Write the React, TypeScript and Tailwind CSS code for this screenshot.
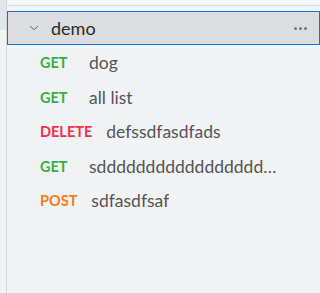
import { ChevronDown } from "lucide-react"

type Api = { method: "GET" | "POST" | "DELETE"; name: string }

const apis: Api[] = [
  { method: "GET", name: "dog" },
  { method: "GET", name: "all list" },
  { method: "DELETE", name: "defssdfasdfads" },
  { method: "GET", name: "sddddddddddddddddddddddddd" },
  { method: "POST", name: "sdfasdfsaf" },
]

const methodColor: Record<Api["method"], string> = {
  GET: "text-[#2fb344]",
  POST: "text-[#f77b17]",
  DELETE: "text-[#f2304b]",
}

export default function App() {
  return (
    <div className="flex h-[293px] w-[320px] overflow-hidden bg-[#f2f3f5] font-['Lato','Liberation_Sans',sans-serif]">
      {/* left rail */}
      <div className="flex w-[7px] shrink-0 flex-col border-r border-[#d6d7da]">
        <div className="h-[30px] bg-[#e4e5e8]" />
      </div>

      <div className="flex min-w-0 flex-1 flex-col">
        <div className="h-[6px] border-b border-[#dcdde0] bg-[#f5f6f8]" />

        {/* folder */}
        <div className="mt-[5px] flex h-[34px] items-center border border-[#1a6fe0] bg-[#dcdde1] pr-[12px]">
          <ChevronDown className="ml-[19px] h-[14px] w-[14px] text-[#555]" strokeWidth={1.6} />
          <span className="ml-[10px] text-[18px] text-[#2b2b2b]">demo</span>
          <div className="ml-auto flex gap-[2px]">
            <span className="h-[3px] w-[3px] rounded-full bg-[#777]" />
            <span className="h-[3px] w-[3px] rounded-full bg-[#777]" />
            <span className="h-[3px] w-[3px] rounded-full bg-[#777]" />
          </div>
        </div>

        {/* requests */}
        <div className="flex flex-col pt-[1px]">
          {apis.map((api, i) => (
            <div key={i} className="flex h-[34.5px] min-w-0 items-center pl-[33px] pr-[42px]">
              <span className={`min-w-[35px] shrink-0 text-[14.5px] font-bold ${methodColor[api.method]}`}>
                {api.method}
              </span>
              <span className="ml-[14px] min-w-0 truncate text-[17.5px] text-[#555]">{api.name}</span>
            </div>
          ))}
        </div>
      </div>
    </div>
  )
}
